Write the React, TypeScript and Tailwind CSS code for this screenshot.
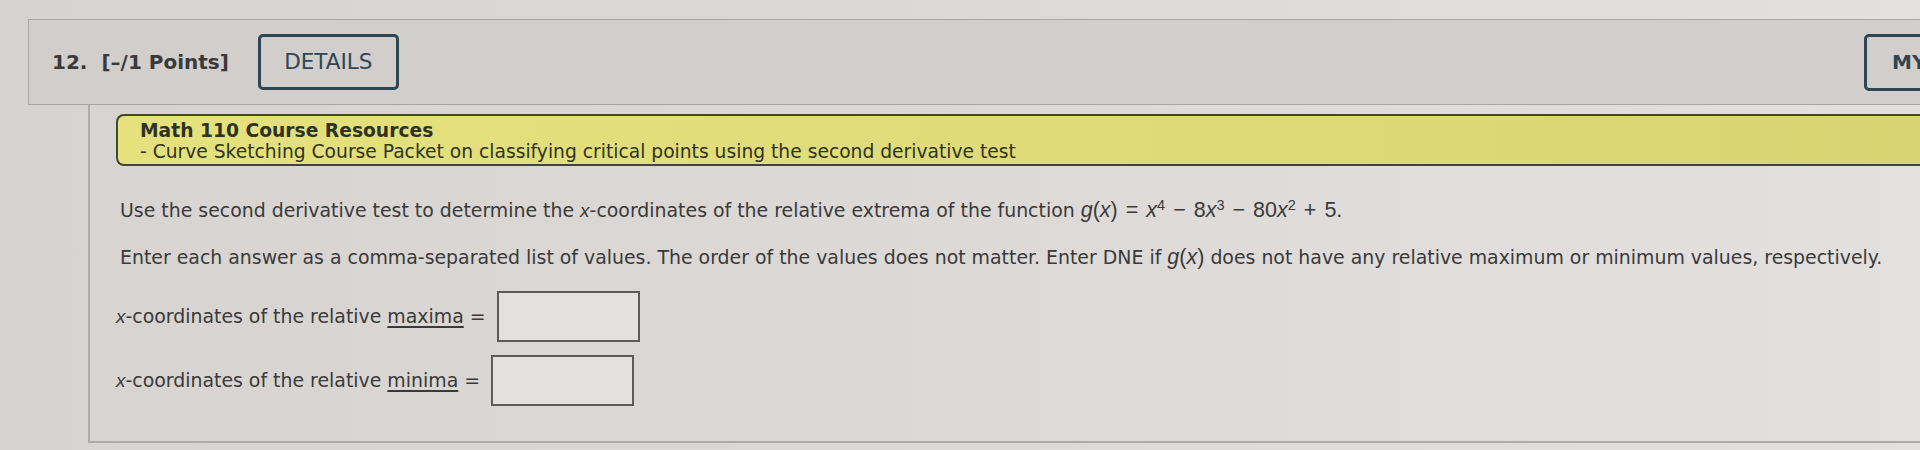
import React from 'react';

// WebAssign style question block: header bar, yellow resources box, prompt and two answer fields
const mathFont = "font-['Liberation_Sans',Arial,sans-serif]";

const Sup = ({ children }: { children: React.ReactNode }) => <sup className="text-[14.5px]">{children}</sup>;

const Op = ({ children }: { children: React.ReactNode }) => <span className="mx-[8px]">{children}</span>;

const AnswerRow = ({ word, className }: { word: string; className?: string }) => (
  <div className={`flex items-center ${className ?? ''}`}>
    <span>
      <i className={mathFont}>x</i>-coordinates of the relative{' '}
      <span className="underline decoration-[2px] underline-offset-[3px]">{word}</span> =
    </span>
    <input
      type="text"
      className="ml-[11px] h-[51px] w-[143px] border-2 border-[#5c5b5a] bg-[#e3e1df] outline-none"
    />
  </div>
);

const App = () => {
  return (
    <div className="h-[450px] w-full overflow-hidden bg-gradient-to-r from-[#d6d3d1] via-[#dcd9d7] to-[#e3e1e0] font-['DejaVu_Sans',Verdana,sans-serif] text-[#3a3a3a]">
      <div className="w-[2080px] pl-[28px] pt-[19px]">
        {/* Question header */}
        <div className="flex h-[86px] w-[2020px] items-center border border-[#a8a5a3] bg-[#d1cecc] pl-[23px] pr-[23px]">
          <span className="text-[20px] font-bold">12.</span>
          <span className="ml-[14px] text-[20px] font-bold">[–/1 Points]</span>
          <button className="ml-[29px] h-[56px] w-[141px] rounded-[5px] border-[3px] border-[#2f4653] text-[21.5px] text-[#2f4653]">
            DETAILS
          </button>
          <button className="ml-auto h-[57px] w-[160px] whitespace-nowrap rounded-[5px] border-[3px] border-[#2f4653] px-[25px] text-left text-[20px] font-bold text-[#2f4653]">
            MY NOTES
          </button>
        </div>

        {/* Question body */}
        <div className="ml-[60px] h-[338px] border-b-2 border-l-2 border-[#aeaba9] pl-[26px] pt-[9px] text-[18.9px] leading-[26px]">
          <div className="rounded-l-[8px] border-2 border-r-0 border-[#3f4a2c] bg-gradient-to-r from-[#e5e27e] to-[#d7d372] pb-[2px] pl-[22px] pt-[4px] text-[18.7px] leading-[21px] text-[#2f3322]">
            <div className="font-bold">Math 110 Course Resources</div>
            <div>- Curve Sketching Course Packet on classifying critical points using the second derivative test</div>
          </div>

          <p className="ml-[4px] mt-[31px]">
            Use the second derivative test to determine the <i className={mathFont}>x</i>-coordinates of the relative
            extrema of the function{' '}
            <span className={`${mathFont} text-[21.5px]`}>
              <i>g</i>(<i>x</i>)<Op>=</Op>
              <i>x</i>
              <Sup>4</Sup>
              <Op>−</Op>8<i>x</i>
              <Sup>3</Sup>
              <Op>−</Op>80<i>x</i>
              <Sup>2</Sup>
              <Op>+</Op>5.
            </span>
          </p>
          <p className="ml-[4px] mt-[20px]">
            Enter each answer as a comma-separated list of values. The order of the values does not matter. Enter DNE if{' '}
            <span className={`${mathFont} text-[21.5px]`}>
              <i>g</i>(<i>x</i>)
            </span>{' '}
            does not have any relative maximum or minimum values, respectively.
          </p>

          <AnswerRow word="maxima" className="mt-[21px]" />
          <AnswerRow word="minima" className="mt-[13px]" />
        </div>
      </div>
    </div>
  );
};

export default App;
